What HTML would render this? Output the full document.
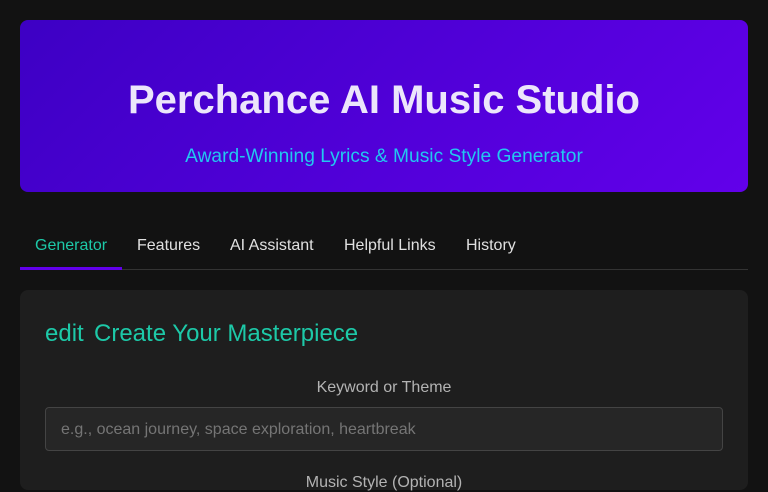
<!DOCTYPE html>
<html><head><style>
*{margin:0;padding:0;box-sizing:border-box}
body{width:768px;height:480px;overflow:hidden;background:#121212;font-family:"Liberation Sans",sans-serif;position:relative}
.hero{position:absolute;left:20px;top:20px;width:728px;height:172px;border-radius:8px;background:linear-gradient(135deg,#3d00c4,#6200ea);text-align:center}
.hero h1{position:absolute;top:58px;width:100%;font-size:40px;font-weight:bold;color:#ece6fb}
.hero p{position:absolute;top:126px;width:100%;font-size:19.2px;color:#22c8f0}
.tabs{position:absolute;left:20px;top:224px;width:728px;height:46px;border-bottom:1px solid #333}
.tab{position:absolute;top:13px;font-size:16px;color:#e0e0e0}
.act{color:#1dc9a8}
.ul{position:absolute;left:0;top:43px;width:102px;height:3px;background:#6200ea}
.card{position:absolute;left:20px;top:290px;width:728px;height:200px;border-radius:8px;background:#1e1e1e}
.title{position:absolute;top:30px;font-size:24px;color:#1dc9a8;white-space:nowrap}
.lbl{position:absolute;width:100%;text-align:center;font-size:16px;color:#b3b3b3}
.inp{position:absolute;left:25px;top:117px;width:678px;height:44px;border:1px solid #444;border-radius:4px;background:#262626;padding:13px 15px 0;font-size:16px;color:#757575}
</style></head><body>
<div class="hero"><h1>Perchance AI Music Studio</h1><p>Award-Winning Lyrics &amp; Music Style Generator</p></div>
<div class="tabs">
<span class="tab act" style="left:15px">Generator</span>
<span class="tab" style="left:117px">Features</span>
<span class="tab" style="left:210px">AI Assistant</span>
<span class="tab" style="left:324px">Helpful Links</span>
<span class="tab" style="left:446px">History</span>
<div class="ul"></div></div>
<div class="card">
<span class="title" style="left:25px">edit</span>
<span class="title" style="left:74px">Create Your Masterpiece</span>
<div class="lbl" style="top:89px">Keyword or Theme</div>
<div class="inp">e.g., ocean journey, space exploration, heartbreak</div>
<div class="lbl" style="top:184px">Music Style (Optional)</div>
</div>
</body></html>
